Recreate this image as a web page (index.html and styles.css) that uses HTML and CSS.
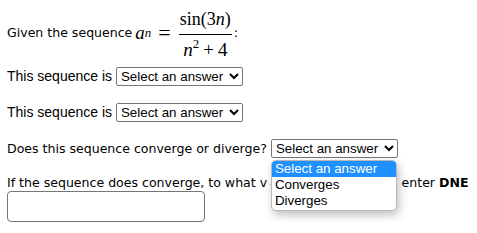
FILE: index.html
```html
<!DOCTYPE html>
<html lang="en">
<head>
  <meta charset="UTF-8">
  <title>Sequence Question</title>
  <link rel="stylesheet" href="styles.css">
</head>
<body>
  <div class="question">
    <!-- Sequence definition -->
    <p class="given">
      Given the sequence
      <span class="math">
        <i>a</i><sub><i>n</i></sub>
        <span class="eq">=</span>
        <span class="frac">
          <span class="num">sin(3<i>n</i>)</span>
          <span class="den"><i>n</i><sup>2</sup><span class="plus">+</span>4</span>
        </span>
      </span>:
    </p>

    <p class="plain">This sequence is
      <select class="answer">
        <option>Select an answer</option>
      </select>
    </p>

    <p class="plain">This sequence is
      <select class="answer">
        <option>Select an answer</option>
      </select>
    </p>

    <p class="row">Does this sequence converge or diverge?
      <span class="select-wrap">
        <select class="answer">
          <option>Select an answer</option>
          <option>Converges</option>
          <option>Diverges</option>
        </select>
        <!-- open dropdown list -->
        <span class="popup">
          <span class="opt active">Select an answer</span>
          <span class="opt">Converges</span>
          <span class="opt">Diverges</span>
        </span>
      </span>
    </p>

    <p class="last">If the sequence does converge, to what v<span class="masked">alue? If it diverges, </span>enter <b>DNE</b>
      <input type="text" class="limit">
    </p>
  </div>
</body>
</html>
```

FILE: styles.css
```css
/* General Styles */
body {
  margin: 0;
  padding: 0 7px;
  background-color: #ffffff;
  color: #000000;
  font-family: "DejaVu Sans", Verdana, sans-serif;
  font-size: 12.55px;
}

.question p {
  margin: 0;
}

/* Math line */
.given {
  display: flex;
  align-items: center;
  height: 67px;
  padding-bottom: 2px;
  box-sizing: border-box;
  white-space: nowrap;
}

.math {
  display: inline-flex;
  align-items: center;
  font-family: "Liberation Serif", serif;
  font-size: 19px;
  margin-left: 3px;
}

.math sub {
  font-size: 13px;
  vertical-align: -5px;
}

.eq {
  font-size: 22px;
  margin: 0 8px 0 7px;
}

.frac {
  display: inline-flex;
  flex-direction: column;
  align-items: center;
  margin-top: 5px;
  margin-right: 2px;
}

.num {
  font-size: 18px;
  padding: 0 1px 4px;
  border-bottom: 1px solid #000;
}

.den {
  padding: 1px 2px 0;
}

.den sup {
  font-size: 13px;
  vertical-align: 8px;
}

.plus {
  margin: 0 4px;
}

/* Answer rows */
.plain {
  font-family: "Liberation Sans", Arial, sans-serif;
  font-size: 14px;
  height: 36px;
}

.row {
  height: 36px;
}

.answer {
  font-family: "Liberation Sans", Arial, sans-serif;
  font-size: 13.33px;
  color: #000;
  height: 19px;
  width: 127px;
  border: 1px solid #767676;
  border-radius: 2px;
  background: #fff;
  padding: 0;
}

.select-wrap {
  position: relative;
  display: inline-block;
}

.popup {
  position: absolute;
  left: 0;
  top: 21px;
  width: 126px;
  box-sizing: border-box;
  display: flex;
  flex-direction: column;
  padding-bottom: 1px;
  background: #fff;
  border: 1px solid #b8b8b8;
  border-radius: 5px;
  box-shadow: 2px 4px 10px rgba(0, 0, 0, 0.25);
  overflow: hidden;
  font-family: "Liberation Sans", Arial, sans-serif;
  font-size: 13.33px;
  z-index: 2;
}

.opt {
  height: 16px;
  line-height: 16px;
  padding-left: 3px;
}

.opt.active {
  background-color: #1e90ff;
  color: #fff;
}

.last {
  white-space: nowrap;
  margin-top: 5px;
}

/* sits under the open list, only spaces out the line */
.masked {
  margin-left: 3px;
  letter-spacing: 0.35px;
}

.limit {
  display: block;
  width: 198px;
  height: 31px;
  box-sizing: border-box;
  border: 1px solid #767676;
  border-radius: 4px;
  margin-top: 1px;
}
```
